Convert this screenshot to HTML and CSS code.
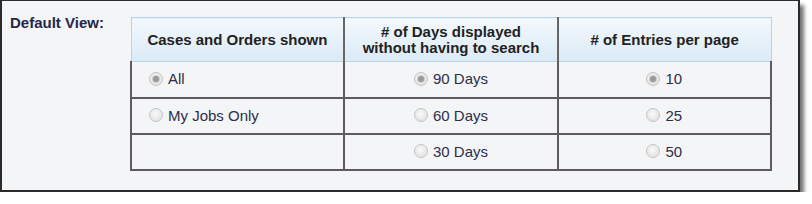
FILE: index.html
```html
<!DOCTYPE html>
<html lang="en">
<head>
  <meta charset="UTF-8">
  <title>Default View</title>
  <link rel="stylesheet" href="styles.css">
</head>
<body>
  <div class="frame">
    <div class="label">Default View:</div>
    <table class="view-table">
      <thead>
        <tr>
          <th>Cases and Orders shown</th>
          <th># of Days displayed<br>without having to search</th>
          <th># of Entries per page</th>
        </tr>
      </thead>
      <tbody>
        <tr>
          <td class="left"><label><input type="radio" name="shown" class="radio" checked> All</label></td>
          <td><label><input type="radio" name="days" class="radio" checked> 90 Days</label></td>
          <td><label><input type="radio" name="entries" class="radio" checked> 10</label></td>
        </tr>
        <tr>
          <td class="left"><label><input type="radio" name="shown" class="radio"> My Jobs Only</label></td>
          <td><label><input type="radio" name="days" class="radio"> 60 Days</label></td>
          <td><label><input type="radio" name="entries" class="radio"> 25</label></td>
        </tr>
        <tr>
          <td class="left"></td>
          <td><label><input type="radio" name="days" class="radio"> 30 Days</label></td>
          <td><label><input type="radio" name="entries" class="radio"> 50</label></td>
        </tr>
      </tbody>
    </table>
  </div>
</body>
</html>
```

FILE: styles.css
```css
body {
  margin: 0;
  background: #fff;
  font-family: "Liberation Sans", Arial, sans-serif;
  font-size: 15px;
}
.frame {
  display: flex;
  align-items: flex-start;
  width: 796px;
  height: 189px;
  padding: 0;
  border: 2px solid #2b2b2b;
  border-top-width: 1px;
  background: #f4f5f7;
  box-shadow: 4px 5px 4px rgba(0,0,0,0.55);
}
.label {
  width: 120px;
  padding: 13px 0 0 8px;
  font-weight: bold;
  color: #26264a;
}
.view-table {
  margin-top: 16px;
  width: 642px;
  border-collapse: collapse;
  table-layout: fixed;
}
.view-table th {
  height: 43px;
  padding: 0;
  font-weight: bold;
  color: #222;
  line-height: 16px;
  background: linear-gradient(#f3f8fc, #dbeaf6);
  border: 1px solid #b4d4ee;
}
.view-table th + th {
  border-left: 2px solid #666;
}
.view-table td {
  height: 34px;
  padding: 0;
  text-align: center;
  color: #2e2e4a;
  border: 2px solid #5e5a5e;
}
.view-table tbody tr:first-child td {
  border-top: 1px solid #b4d4ee;
  height: 35px;
}
.view-table td.left {
  text-align: left;
  padding-left: 17px;
}
.view-table label {
  display: inline-flex;
  align-items: center;
  gap: 5px;
}
.radio {
  appearance: none;
  -webkit-appearance: none;
  width: 14px;
  height: 14px;
  margin: 0;
  border: 1px solid #c4c4c4;
  border-radius: 50%;
  background: radial-gradient(circle at 45% 40%, #fafafa, #dcdcdc);
  position: relative;
}
.radio:checked::after {
  content: "";
  position: absolute;
  left: 3px;
  top: 3px;
  width: 6px;
  height: 6px;
  border-radius: 50%;
  background: #9a9a9a;
  box-shadow: 0 0 0 1px #d0d0d0;
}
```
